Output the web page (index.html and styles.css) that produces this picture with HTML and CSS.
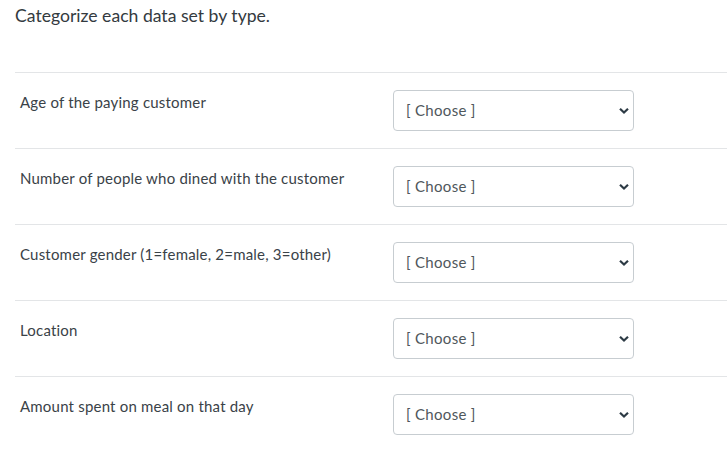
FILE: index.html
```html
<!DOCTYPE html>
<html>
<head>
<meta charset="utf-8">
<link rel="stylesheet" href="styles.css">
</head>
<body>
<div class="page">
  <h1 class="title">Categorize each data set by type.</h1>
  <div class="rows">
    <div class="row">
      <div class="label">Age of the paying customer</div>
      <div class="select-wrap">
        <select class="select"><option>[ Choose ]</option></select>
        <svg class="chev" width="10" height="8" viewBox="0 0 10 8"><path d="M1 1.8 L5 5.6 L9 1.8" fill="none" stroke="#2d3b45" stroke-width="2.2"/></svg>
      </div>
    </div>
    <div class="row">
      <div class="label">Number of people who dined with the customer</div>
      <div class="select-wrap">
        <select class="select"><option>[ Choose ]</option></select>
        <svg class="chev" width="10" height="8" viewBox="0 0 10 8"><path d="M1 1.8 L5 5.6 L9 1.8" fill="none" stroke="#2d3b45" stroke-width="2.2"/></svg>
      </div>
    </div>
    <div class="row">
      <div class="label">Customer gender (1=female, 2=male, 3=other)</div>
      <div class="select-wrap">
        <select class="select"><option>[ Choose ]</option></select>
        <svg class="chev" width="10" height="8" viewBox="0 0 10 8"><path d="M1 1.8 L5 5.6 L9 1.8" fill="none" stroke="#2d3b45" stroke-width="2.2"/></svg>
      </div>
    </div>
    <div class="row">
      <div class="label">Location</div>
      <div class="select-wrap">
        <select class="select"><option>[ Choose ]</option></select>
        <svg class="chev" width="10" height="8" viewBox="0 0 10 8"><path d="M1 1.8 L5 5.6 L9 1.8" fill="none" stroke="#2d3b45" stroke-width="2.2"/></svg>
      </div>
    </div>
    <div class="row">
      <div class="label">Amount spent on meal on that day</div>
      <div class="select-wrap">
        <select class="select"><option>[ Choose ]</option></select>
        <svg class="chev" width="10" height="8" viewBox="0 0 10 8"><path d="M1 1.8 L5 5.6 L9 1.8" fill="none" stroke="#2d3b45" stroke-width="2.2"/></svg>
      </div>
    </div>
  </div>
</div>
</body>
</html>
```
FILE: styles.css
```css
html, body {
  margin: 0;
  padding: 0;
  background: #ffffff;
}
body {
  font-family: Lato, "Open Sans", sans-serif;
  color: #333a40;
}
.page {
  padding-left: 15px;
}
.title {
  margin: 0;
  padding-top: 5px;
  font-size: 17.6px;
  font-weight: 400;
  line-height: 22px;
  color: #333a40;
  height: 67px;
}
.row {
  display: grid;
  grid-template-columns: 378px 241px;
  border-top: 1px solid #e3e5e7;
  height: 75px;
}
.label {
  padding-left: 5px;
  padding-top: 19px;
  font-size: 15px;
  letter-spacing: 0.2px;
  line-height: 20px;
  color: #3a4248;
}
.select-wrap {
  position: relative;
  margin-top: 17px;
  height: 41px;
}
.select {
  appearance: none;
  -webkit-appearance: none;
  width: 241px;
  height: 41px;
  margin: 0;
  padding: 0 0 2px 12px;
  border: 1px solid #c7cdd1;
  border-radius: 4px;
  background: #ffffff;
  font-family: Lato, "Open Sans", sans-serif;
  font-size: 15px;
  letter-spacing: 0.3px;
  color: #4f575c;
  outline: none;
}
.chev {
  position: absolute;
  right: 5px;
  top: 17px;
  pointer-events: none;
}
```
